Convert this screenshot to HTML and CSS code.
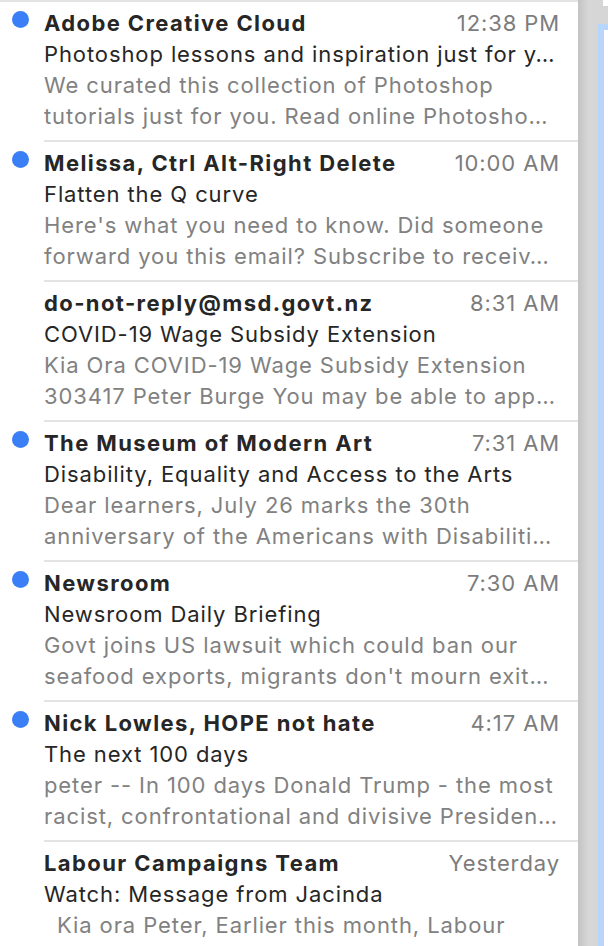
FILE: index.html
```html
<!DOCTYPE html>
<html lang="en">
<head>
    <meta charset="UTF-8">
    <meta name="viewport" content="width=device-width, initial-scale=1.0">
    <title>Inbox</title>
    <link rel="stylesheet" href="styles.css">
</head>
<body>
    <div class="janela">
        <!-- LISTA DE MENSAGENS -->
        <div class="lista">
            <div class="msg nao-lida">
                <span class="ponto"></span>
                <div class="conteudo">
                    <div class="topo">
                        <span class="remetente">Adobe Creative Cloud</span>
                        <span class="hora">12:38 PM</span>
                    </div>
                    <div class="assunto">Photoshop lessons and inspiration just for y…</div>
                    <div class="previa">
                        <span>We curated this collection of Photoshop</span>
                        <span>tutorials just for you. Read online Photosho…</span>
                    </div>
                </div>
            </div>

            <div class="msg nao-lida">
                <span class="ponto"></span>
                <div class="conteudo">
                    <div class="topo">
                        <span class="remetente">Melissa, Ctrl Alt-Right Delete</span>
                        <span class="hora">10:00 AM</span>
                    </div>
                    <div class="assunto">Flatten the Q curve</div>
                    <div class="previa">
                        <span>Here's what you need to know. Did someone</span>
                        <span>forward you this email? Subscribe to receiv…</span>
                    </div>
                </div>
            </div>

            <div class="msg">
                <span class="ponto"></span>
                <div class="conteudo">
                    <div class="topo">
                        <span class="remetente">do-not-reply@msd.govt.nz</span>
                        <span class="hora">8:31 AM</span>
                    </div>
                    <div class="assunto">COVID-19 Wage Subsidy Extension</div>
                    <div class="previa">
                        <span>Kia Ora COVID-19 Wage Subsidy Extension</span>
                        <span>303417 Peter Burge You may be able to app…</span>
                    </div>
                </div>
            </div>

            <div class="msg nao-lida">
                <span class="ponto"></span>
                <div class="conteudo">
                    <div class="topo">
                        <span class="remetente">The Museum of Modern Art</span>
                        <span class="hora">7:31 AM</span>
                    </div>
                    <div class="assunto">Disability, Equality and Access to the Arts</div>
                    <div class="previa">
                        <span>Dear learners, July 26 marks the 30th</span>
                        <span>anniversary of the Americans with Disabiliti…</span>
                    </div>
                </div>
            </div>

            <div class="msg nao-lida">
                <span class="ponto"></span>
                <div class="conteudo">
                    <div class="topo">
                        <span class="remetente">Newsroom</span>
                        <span class="hora">7:30 AM</span>
                    </div>
                    <div class="assunto">Newsroom Daily Briefing</div>
                    <div class="previa">
                        <span>Govt joins US lawsuit which could ban our</span>
                        <span>seafood exports, migrants don't mourn exit…</span>
                    </div>
                </div>
            </div>

            <div class="msg nao-lida">
                <span class="ponto"></span>
                <div class="conteudo">
                    <div class="topo">
                        <span class="remetente">Nick Lowles, HOPE not hate</span>
                        <span class="hora">4:17 AM</span>
                    </div>
                    <div class="assunto">The next 100 days</div>
                    <div class="previa">
                        <span>peter -- In 100 days Donald Trump - the most</span>
                        <span>racist, confrontational and divisive Presiden…</span>
                    </div>
                </div>
            </div>

            <div class="msg">
                <span class="ponto"></span>
                <div class="conteudo">
                    <div class="topo">
                        <span class="remetente">Labour Campaigns Team</span>
                        <span class="hora">Yesterday</span>
                    </div>
                    <div class="assunto">Watch: Message from Jacinda</div>
                    <div class="previa recuo">
                        <span>Kia ora Peter, Earlier this month, Labour</span>
                    </div>
                </div>
            </div>
        </div>

        <!-- DIVISOR E PAINEL AO LADO -->
        <div class="lateral">
            <div class="lateral-canto"></div>
            <div class="lateral-painel"></div>
        </div>
    </div>
</body>
</html>
```

FILE: styles.css
```css
/* [1] GERAL */
body {
    margin: 0;
    font-family: Inter, "Noto Sans", sans-serif;
    background-color: #fff;
    overflow: hidden;
}

.janela {
    display: flex;
    height: 946px;
}

/* [2] LISTA */
.lista {
    width: 578px;
    border-top: 2px solid #e3e3e3;
    overflow: hidden;
}

.msg {
    display: flex;
    height: 138px;
    border-bottom: 2px solid #e3e3e3;
    margin-left: 44px;
    position: relative;
}

.ponto {
    display: none;
    position: absolute;
    left: -32px;
    top: 9px;
    width: 17px;
    height: 17px;
    border-radius: 50%;
    background-color: #3a7ff6;
}

.nao-lida .ponto {
    display: block;
}

.conteudo {
    flex: 1;
    min-width: 0;
    padding: 6px 18px 0 0;
    font-size: 22px;
    line-height: 31px;
    letter-spacing: 0.9px;
    white-space: nowrap;
}

.topo {
    display: flex;
    justify-content: space-between;
}

.remetente {
    font-weight: 700;
    letter-spacing: 1.4px;
    color: #262626;
}

.hora {
    color: #7c7c7c;
}

.assunto {
    color: #262626;
    overflow: hidden;
}

.previa {
    color: #818181;
}

.previa span {
    display: block;
    overflow: hidden;
}

.previa.recuo {
    padding-left: 13px;
}

/* [3] LATERAL */
.lateral {
    width: 30px;
    display: flex;
    flex-direction: column;
    background: linear-gradient(to right, #c3c3c3, #d7d7d7 35%, #d5d5d5);
}

.lateral-canto {
    height: 6px;
    margin-left: 25px;
    background-color: #fff;
}

.lateral-painel {
    flex: 1;
    margin-top: 18px;
    margin-left: 20px;
    border-left: 6px solid #b8d5fb;
    border-top: 6px solid #b8d5fb;
    background-color: #fff;
}
```
